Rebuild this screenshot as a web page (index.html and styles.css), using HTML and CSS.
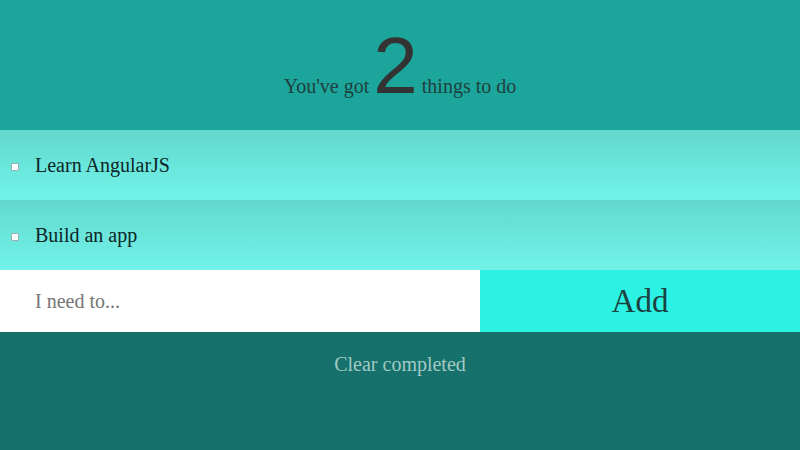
FILE: index.html
```html
<!DOCTYPE html>
<html>
<head>
<meta charset="utf-8">
<link rel="stylesheet" href="styles.css">
</head>
<body>
<div class="app">
  <header class="header">
    <span class="lead">You've got</span>
    <span class="count">2</span>
    <span class="lead">things to do</span>
  </header>
  <ul class="list">
    <li class="item"><input type="checkbox" class="check"><span class="label">Learn AngularJS</span></li>
    <li class="item"><input type="checkbox" class="check"><span class="label">Build an app</span></li>
  </ul>
  <form class="add-form">
    <input class="new-input" type="text" placeholder="I need to...">
    <button class="add-btn" type="button">Add</button>
  </form>
  <footer class="footer">
    <span class="clear">Clear completed</span>
  </footer>
</div>
</body>
</html>
```
FILE: styles.css
```css
html, body {
  margin: 0;
  padding: 0;
  height: 100%;
}
body {
  font-family: "Liberation Serif", "Times New Roman", serif;
  background: #16716c;
}
.app {
  display: flex;
  flex-direction: column;
  height: 100%;
}
.header {
  height: 130px;
  background: #1ca69b;
  display: flex;
  justify-content: center;
  align-items: baseline;
  padding-top: 26px;
  box-sizing: border-box;
  gap: 4px;
}
.lead {
  font-size: 20px;
  color: #1f3f3f;
}
.count {
  font-family: "Liberation Sans", Arial, sans-serif;
  font-size: 80px;
  color: #333333;
  line-height: 1;
}
.list {
  list-style: none;
  margin: 0;
  padding: 0;
}
.item {
  height: 70px;
  display: flex;
  align-items: center;
  background: linear-gradient(to bottom, #62d8cd, #72f3e9);
}
.check {
  appearance: none;
  -webkit-appearance: none;
  width: 8px;
  height: 8px;
  margin: 3px 0 0 11px;
  background: #ffffff;
  border: 1px solid #9aaeae;
  border-radius: 1px;
  box-sizing: border-box;
}
.label {
  font-size: 20px;
  color: #0c2626;
  margin-left: 16px;
}
.add-form {
  display: flex;
  height: 62px;
  margin: 0;
}
.new-input {
  width: 480px;
  border: none;
  outline: none;
  padding: 0 0 0 35px;
  box-sizing: border-box;
  font-family: "Liberation Serif", serif;
  font-size: 20px;
  background: #ffffff;
  color: #333;
}
.new-input::placeholder {
  color: #757575;
}
.add-btn {
  flex: 1;
  border: none;
  background: #2cf2e3;
  font-family: "Liberation Serif", serif;
  font-size: 33px;
  color: #1c4141;
  padding: 0;
}
.footer {
  flex: 1;
  background: #16716c;
  display: flex;
  justify-content: center;
  padding-top: 21px;
}
.clear {
  font-size: 20px;
  color: #a4c9c5;
}
```
